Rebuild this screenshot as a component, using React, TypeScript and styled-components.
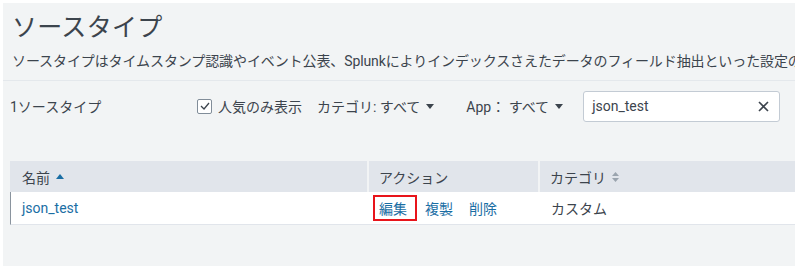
import React from "react";
import styled, { createGlobalStyle } from "styled-components";

const Global = createGlobalStyle`
  html, body { margin: 0; padding: 0; background: #ffffff; }
  body { font-family: Roboto, "Noto Sans CJK JP", sans-serif; color: #3c444d; }
  * { box-sizing: border-box; }
`;

const Page = styled.div`
  margin: 3px 5px 0 3px;
  height: 263px;
  background: #f2f4f5;
  overflow: hidden;
`;

const Header = styled.header`
  padding: 8px 0 0 9px;
  border-bottom: 1px solid #e4e8ec;
  height: 78px;
  overflow: hidden;
`;

const Title = styled.h1`
  margin: 0;
  font-size: 25px;
  font-weight: 400;
  line-height: 34px;
  letter-spacing: 0.3px;
  color: #3c444d;
  white-space: nowrap;
`;

const Desc = styled.p`
  margin: 6px 0 0;
  font-size: 14px;
  line-height: 20px;
  letter-spacing: -0.1px;
  color: #3c444d;
  white-space: nowrap;
`;

const Toolbar = styled.div`
  display: flex;
  align-items: center;
  height: 44px;
  margin-top: 3px;
  padding-left: 7px;
  font-size: 14px;
`;

const Count = styled.span`
  width: 187px;
`;

const CheckLabel = styled.label`
  display: flex;
  align-items: center;
  gap: 6px;
  margin-right: 15px;
`;

const Box = styled.span`
  width: 15px;
  height: 15px;
  border: 1px solid #818d99;
  border-radius: 2px;
  background: #fff;
  display: flex;
  align-items: center;
  justify-content: center;
`;

const Drop = styled.span<{ $gap: number }>`
  display: flex;
  align-items: center;
  gap: 4px;
  margin-right: ${(p) => p.$gap}px;
  white-space: nowrap;
`;

const Caret = styled.span`
  width: 0;
  height: 0;
  border-left: 4px solid transparent;
  border-right: 4px solid transparent;
  border-top: 5px solid #3c444d;
  margin-left: 2px;
`;

const Search = styled.div`
  width: 197px;
  height: 31px;
  background: #fff;
  border: 1px solid #c3cbd4;
  border-radius: 3px;
  display: flex;
  align-items: center;
  justify-content: space-between;
  padding: 0 10px 0 8px;
  font-size: 14px;
`;

const Table = styled.div`
  margin: 33px 0 0 7px;
`;

const HeadRow = styled.div`
  display: grid;
  grid-template-columns: 357px 171px 1fr;
  height: 31px;
  background: #e1e5eb;
`;

const HeadCell = styled.div<{ $div?: boolean }>`
  display: flex;
  align-items: center;
  gap: 6px;
  padding-left: ${(p) => (p.$div ? 10 : 12)}px;
  border-left: ${(p) => (p.$div ? "2px solid #f2f4f5" : "none")};
  font-size: 14px;
  color: #3c444d;
`;

const Row = styled.div`
  display: grid;
  grid-template-columns: 357px 171px 1fr;
  height: 33px;
  background: #fff;
  border-left: 1px solid #8a949e;
  border-bottom: 1px solid #e1e5eb;
`;

const Cell = styled.div<{ $pl: number }>`
  display: flex;
  align-items: center;
  padding-left: ${(p) => p.$pl}px;
  font-size: 14px;
`;

const Link = styled.a<{ $boxed?: boolean; $ml?: number }>`
  color: #1a6ea4;
  text-decoration: none;
  margin-left: ${(p) => p.$ml ?? 0}px;
  ${(p) =>
    p.$boxed
      ? `border: 2px solid #e8141b; padding: 2px 8px 2px 4px; height: 26px; display:flex; align-items:center;`
      : ""}
`;

const SortUp = () => (
  <svg width="8" height="6" viewBox="0 0 8 6">
    <path d="M0 5 L4 0 L8 5 Z" fill="#1a6ea4" />
  </svg>
);

const SortBoth = () => (
  <svg width="7" height="10" viewBox="0 0 7 10">
    <path d="M0 4 L3.5 0 L7 4 Z M0 6 L3.5 10 L7 6 Z" fill="#9aa4ae" />
  </svg>
);

export default function App() {
  return (
    <>
      <Global />
      <Page>
        <Header>
          <Title>ソースタイプ</Title>
          <Desc>
            ソースタイプはタイムスタンプ認識やイベント公表、Splunkによりインデックスさえたデータのフィールド抽出といった設定の
          </Desc>
        </Header>
        <Toolbar>
          <Count>1ソースタイプ</Count>
          <CheckLabel>
            <Box>
              <svg width="10" height="8" viewBox="0 0 10 8">
                <path d="M1 4 L4 7 L9 1" stroke="#3c444d" strokeWidth="1.3" fill="none" />
              </svg>
            </Box>
            人気のみ表示
          </CheckLabel>
          <Drop $gap={32}>
            カテゴリ: すべて <Caret />
          </Drop>
          <Drop $gap={20}>
            App： すべて <Caret />
          </Drop>
          <Search>
            <span>json_test</span>
            <svg width="11" height="11" viewBox="0 0 11 11">
              <path d="M1 1 L10 10 M10 1 L1 10" stroke="#3c444d" strokeWidth="1.6" />
            </svg>
          </Search>
        </Toolbar>
        <Table>
          <HeadRow>
            <HeadCell>
              名前 <SortUp />
            </HeadCell>
            <HeadCell $div>アクション</HeadCell>
            <HeadCell $div>
              カテゴリ <SortBoth />
            </HeadCell>
          </HeadRow>
          <Row>
            <Cell $pl={11}>
              <Link>json_test</Link>
            </Cell>
            <Cell $pl={5}>
              <Link $boxed>編集</Link>
              <Link $ml={8}>複製</Link>
              <Link $ml={16}>削除</Link>
            </Cell>
            <Cell $pl={12}>カスタム</Cell>
          </Row>
        </Table>
      </Page>
    </>
  );
}
